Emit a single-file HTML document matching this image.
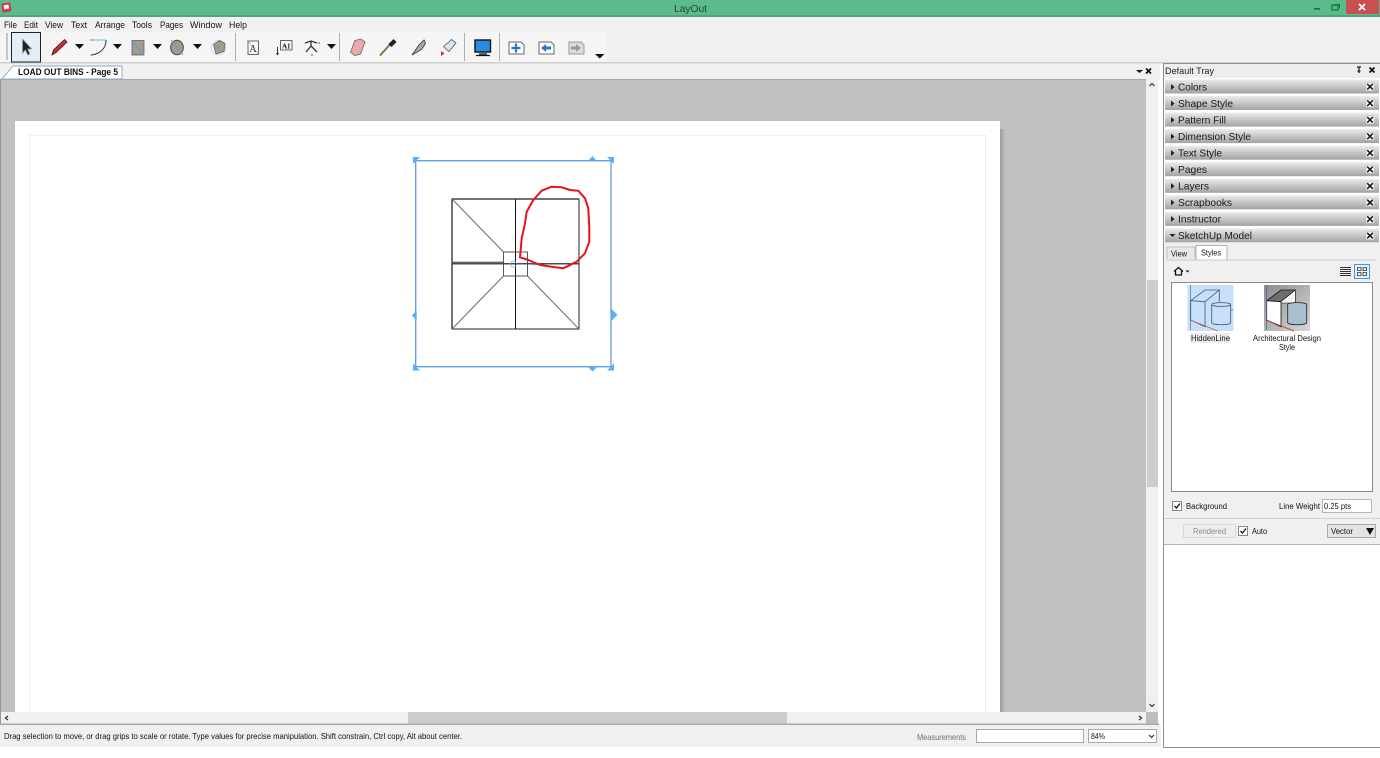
<!DOCTYPE html>
<html><head><meta charset="utf-8"><title>LayOut</title>
<style>
html,body{margin:0;padding:0;background:#fff;width:1380px;height:758px;overflow:hidden}
svg{display:block;font-family:"Liberation Sans",sans-serif}
text{fill:#111}
.m{font-size:9.5px}
.h{font-size:10.5px;fill:#1a1a1a}
.s{font-size:8.6px}
</style></head><body>
<svg width="1380" height="758" viewBox="0 0 1380 758" xmlns="http://www.w3.org/2000/svg">
<defs>
<linearGradient id="hg" x1="0" y1="0" x2="0" y2="1"><stop offset="0" stop-color="#ececec"/><stop offset=".45" stop-color="#cacaca"/><stop offset="1" stop-color="#a2a2a2"/></linearGradient>
<linearGradient id="sh" x1="0" y1="0" x2="1" y2="0"><stop offset="0" stop-color="#9a9a9a"/><stop offset="1" stop-color="#c0c0c0"/></linearGradient>
<linearGradient id="tg" x1="0" y1="0" x2="1" y2="1"><stop offset="0" stop-color="#8c8c8c"/><stop offset="1" stop-color="#d8d8d8"/></linearGradient>
<g id="cx"><rect x="-4" y="-4" width="8" height="8" fill="#f6f6f6" stroke="#bbb" stroke-width=".5"/><path d="M-2.800-2.800L2.800 2.800M2.800-2.800L-2.800 2.800" stroke="#111" stroke-width="1.500"/></g>
</defs>
<rect width="1380" height="758" fill="#fff"/>
<!-- title -->
<rect width="1380" height="15" fill="#5bbb8b"/><rect y="15" width="1380" height="2" fill="#4fa67a"/>
<rect x="2" y="3" width="9" height="9" rx="1" fill="#d8344a" transform="rotate(-10 6 8)"/><rect x="4" y="5" width="5" height="4" fill="#fff" transform="rotate(-10 6 8)"/>
<text x="674" y="12" textLength="33" lengthAdjust="spacingAndGlyphs" style="font-size:10.5px;fill:#1f4a35">LayOut</text>
<rect x="1346" width="33" height="14" fill="#c75050"/>
<path d="M1359 4l6 6M1365 4l-6 6" stroke="#fff" stroke-width="1.600"/>
<rect x="1314" y="8" width="6" height="1.600" fill="#173"/>
<rect x="1332" y="5" width="6" height="5" fill="none" stroke="#173" stroke-width="1.200"/><path d="M1334 4.500h5.500v4" fill="none" stroke="#173"/>
<!-- menu + toolbar -->
<rect y="17" width="1380" height="46" fill="#f0f0f0"/>
<text class="m" x="4" y="28" textLength="13" lengthAdjust="spacingAndGlyphs">File</text>
<text class="m" x="24" y="28" textLength="14" lengthAdjust="spacingAndGlyphs">Edit</text>
<text class="m" x="45" y="28" textLength="18" lengthAdjust="spacingAndGlyphs">View</text>
<text class="m" x="71" y="28" textLength="16" lengthAdjust="spacingAndGlyphs">Text</text>
<text class="m" x="95" y="28" textLength="30" lengthAdjust="spacingAndGlyphs">Arrange</text>
<text class="m" x="132" y="28" textLength="20" lengthAdjust="spacingAndGlyphs">Tools</text>
<text class="m" x="160" y="28" textLength="23" lengthAdjust="spacingAndGlyphs">Pages</text>
<text class="m" x="190" y="28" textLength="32" lengthAdjust="spacingAndGlyphs">Window</text>
<text class="m" x="229" y="28" textLength="18" lengthAdjust="spacingAndGlyphs">Help</text>
<rect y="32" width="606.500" height="30" fill="#f5f5f5"/>
<rect y="62" width="1380" height="1.500" fill="#cfcfcf"/>
<rect x="6" y="33" width="2" height="27" fill="#c4c4c4"/>
<rect x="11.500" y="32.500" width="29" height="29.500" fill="#e3eef9" stroke="#222"/>
<path d="M22.500 39v14l3-3 2.200 5 2.200-1-2.200-5h4z" fill="#222" stroke="#999" stroke-width=".8"/>
<!-- pencil -->
<path d="M52 55l1.500-5 11-10.500 2.500 2.500-11 10.500z" fill="#e3222a" stroke="#222" stroke-width=".8"/>
<path d="M75 44h9l-4.500 5zM113 44h9l-4.500 5zM153 44h9l-4.500 5zM193 44h9l-4.500 5zM327 44h9l-4.500 5zM595 54h9.500l-4.750 4.500z" fill="#111"/>
<!-- arc -->
<path d="M92 40h14" stroke="#8fc0ea" stroke-width="1.200"/><path d="M106 40c0 7-4 13-14 15" fill="none" stroke="#333" stroke-width="1"/>
<circle cx="91.500" cy="40" r="1" fill="#4aa0e8"/><circle cx="91.500" cy="55" r="1" fill="#4aa0e8"/>
<!-- rect -->
<rect x="132" y="40.500" width="12" height="14.500" fill="#a39c88" stroke="#555" stroke-width=".7"/><path d="M131.500 40l12.500 15" stroke="#4aa0e8"/>
<!-- circle -->
<ellipse cx="177" cy="47.500" rx="6.300" ry="7.300" fill="#a39c88" stroke="#444"/><path d="M171 40l12 15" stroke="#4aa0e8"/>
<!-- polygon -->
<circle cx="218.500" cy="47.500" r="7.300" fill="none" stroke="#bfe0f5" stroke-width="1"/>
<path d="M213.500 44.500l6-4 5.500 3-1 8-8 2.500z" fill="#a39c88" stroke="#666" stroke-width=".8"/><circle cx="218.500" cy="47.500" r=".9" fill="#4aa0e8"/>
<rect x="235" y="33" width="1" height="28" fill="#b0b0b0"/>
<!-- text tools -->
<rect x="248" y="41" width="10.500" height="13.500" fill="#fafafa" stroke="#444" stroke-width=".8"/><text x="253" y="52" text-anchor="middle" style="font-size:10px;font-family:'Liberation Serif',serif">A</text><path d="M247 40l12 15" stroke="#4aa0e8" stroke-width=".6"/>
<rect x="280.500" y="40.500" width="11.500" height="9.500" fill="#fafafa" stroke="#444" stroke-width=".8"/><text x="282" y="48.500" style="font-size:7px;font-weight:bold;font-family:'Liberation Serif',serif">A1</text><path d="M277.500 47v8" stroke="#333"/><path d="M276 53h3l-1.500 2.500z" fill="#222"/>
<path d="M305 43l6-2 6 2M311 41v5l-5 6M311 46l6 6" fill="none" stroke="#333" stroke-width="1.300"/><circle cx="319" cy="43" r="1" fill="#3c3"/><circle cx="312" cy="55" r="1" fill="#3c3"/>
<rect x="339" y="33" width="1" height="28" fill="#b0b0b0"/>
<!-- eraser -->
<path d="M350.500 52l4.500-11.500 6-1.500 4 3-4.500 12-6 1.500z" fill="#f0a6ae" stroke="#666" stroke-width=".8"/>
<!-- dropper -->
<path d="M380 55.500l10-11" stroke="#8a6a3a" stroke-width="1.800"/><path d="M389.500 44l4-4 2 2-4 4z" fill="#222" stroke="#222" stroke-width="1.500"/>
<!-- knife -->
<path d="M412 55l7-10 5-5 1.500 3.500-4 6z" fill="#aaa" stroke="#333" stroke-width=".8"/>
<!-- glue -->
<path d="M443.500 46.500l8-7 4.500 3.500-7 8.500z" fill="#d8e6f2" stroke="#555" stroke-width=".8"/><path d="M441 51l3.500 2.500-3.500 2.500z" fill="#c33"/>
<rect x="464" y="33" width="1" height="28" fill="#b0b0b0"/>
<!-- monitor -->
<rect x="475" y="40" width="15.500" height="12" fill="#2a8be0" stroke="#111" stroke-width="1.400"/><path d="M479 54h8M476 55.500h14" stroke="#111" stroke-width="1.200"/>
<rect x="499" y="33" width="1" height="28" fill="#b0b0b0"/>
<!-- page tools -->
<path d="M509 42h12l3 3v9h-15z" fill="#fff" stroke="#666"/><path d="M516 43.500v9M511.500 48h9" stroke="#1e78cc" stroke-width="2.200"/>
<path d="M539 42h12l3 3v9h-15z" fill="#fff" stroke="#666"/><path d="M541 48l5-4v2.500h5v3h-5v2.500z" fill="#1e78cc"/>
<path d="M569 42h12l3 3v9h-15z" fill="#ddd" stroke="#999"/><path d="M581 48l-5-4v2.500h-5v3h5v2.500z" fill="#999"/>
<!-- tabs -->
<rect y="63.500" width="1160" height="16" fill="#f0f0f0"/>
<path d="M2 79l11-13h109v13z" fill="#fff" stroke="#8aa8c0" stroke-width=".9"/>
<text x="18" y="75" textLength="100" lengthAdjust="spacingAndGlyphs" style="font-size:8.800px;font-weight:bold">LOAD OUT BINS - Page 5</text>
<path d="M1136 70h7l-3.500 3z" fill="#111"/><path d="M1146 68.500l5 5M1151 68.500l-5 5" stroke="#111" stroke-width="1.700"/>
<!-- canvas -->
<rect x="0" y="79" width="1146" height="633" fill="#c0c0c0"/><rect x="0" y="79" width="1146" height="1" fill="#9ab"/><rect x="0" y="79" width="1" height="646" fill="#999"/>
<rect x="1000" y="129" width="5" height="583" fill="url(#sh)"/>
<rect x="15" y="121" width="985" height="591" fill="#fff"/>
<path d="M29.500 712V135.500H985.500V712" fill="none" stroke="#e9f0f0"/>
<!-- drawing -->
<g fill="none">
<rect x="452" y="199" width="127" height="130" stroke="#222" stroke-width="1"/>
<path d="M452 199v130M452 199h127" stroke="#444" stroke-width="1.500"/>
<path d="M515.500 199v130" stroke="#111" stroke-width="1"/>
<path d="M452 263.800h127" stroke="#111" stroke-width="1.100"/>
<path d="M452 262.300h51" stroke="#666" stroke-width="1.300"/>
<rect x="503.500" y="252" width="24" height="24" stroke="#444" stroke-width=".9"/>
<path d="M452 199l51.500 53M452 329l51.500-53M579 329l-51.500-53" stroke="#666" stroke-width=".9"/>
<circle cx="513.500" cy="264" r="3" stroke="#7ab8ee" stroke-width=".8"/><path d="M532 264.500h5" stroke="#4aa0e8" stroke-width="1.500"/>
<path d="M520 257.300L521.700 238.300 525 223.300 526.700 211.700 533.300 200 541.700 190.700 551.700 186.700 561.700 187.300 570 190 578.300 190.700 585 198.300 588.300 208.300 589.300 228.300 589.300 241.700 585 253.300 576.700 261.700 563.300 268.300 551.700 266.700 540 265 528.300 260z" stroke="#e8121e" stroke-width="2" stroke-linejoin="round"/>
<rect x="415.700" y="160.700" width="195.300" height="206" stroke="#5a9ae6" stroke-width="1.300"/>
</g>
<g fill="#5aaef5">
<path d="M413 157h7l-7 7zM614 157h-7l7 7zM413 370.500h7l-7-7zM614 370.500h-7l7-7z"/>
<path d="M415 158v3h-2zM612 158v3h2z"/>
<path d="M587.700 161.500l4.700-5.500 4.700 5.500zM587 366h11l-5.500 5.500zM416.700 310.700v9.400l-5-4.700zM610.700 308l6.700 6.800-6.700 6.900z"/>
</g>
<!-- scrollbars -->
<rect x="1146" y="79" width="12" height="633" fill="#f0f0f0"/>
<rect x="1147" y="280" width="11" height="207" fill="#cdcdcd"/>
<path d="M1149.500 86l2.500-2.500 2.500 2.500M1149.500 704l2.500 2.500 2.500-2.500" fill="none" stroke="#333" stroke-width="1.200"/>
<rect x="1" y="712" width="1145" height="11.500" fill="#f0f0f0"/>
<rect x="408" y="712" width="379" height="11.500" fill="#cdcdcd"/>
<path d="M8 716l-2.500 2 2.500 2M1139 716l2.500 2-2.500 2" fill="none" stroke="#333" stroke-width="1.200"/>
<rect x="1146" y="712" width="12" height="11.500" fill="#bdbdbd"/>
<rect x="0" y="723.500" width="1159" height="1.500" fill="#a9a9a9"/>
<!-- status -->
<rect y="725" width="1161" height="22" fill="#f0f0f0"/>
<text class="s" x="4" y="739" textLength="458" lengthAdjust="spacingAndGlyphs">Drag selection to move, or drag grips to scale or rotate. Type values for precise manipulation. Shift constrain, Ctrl copy, Alt about center.</text>
<text class="s" x="917" y="740" textLength="49" lengthAdjust="spacingAndGlyphs" style="fill:#66707a">Measurements</text>
<rect x="976.500" y="729.500" width="107" height="13" fill="#fff" stroke="#a8a8a8"/>
<rect x="1088.500" y="729.500" width="68" height="13" fill="#fff" stroke="#a8a8a8"/>
<text class="s" x="1091" y="739" textLength="14" lengthAdjust="spacingAndGlyphs">84%</text>
<path d="M1149 735l2.500 2.500 2.500-2.500" fill="none" stroke="#333" stroke-width="1.200"/>
<!-- tray -->
<rect x="1163.500" y="63.500" width="217" height="684" fill="#fff" stroke="#8e8e8e"/>
<rect x="1164" y="64" width="216" height="14" fill="#ededed"/>
<text x="1165" y="74" textLength="49" lengthAdjust="spacingAndGlyphs" style="font-size:9.500px;fill:#222">Default Tray</text>
<path d="M1357 67h4M1359 67v6M1357.500 71h3" stroke="#222" stroke-width="1.300"/>
<path d="M1369.500 67.500l5 5M1374.500 67.500l-5 5" stroke="#111" stroke-width="1.700"/>
<g id="heads" fill="url(#hg)">
<rect x="1165" y="79.500" width="214" height="14"/>
<rect x="1165" y="96" width="214" height="14"/>
<rect x="1165" y="112.600" width="214" height="14"/>
<rect x="1165" y="129.100" width="214" height="14"/>
<rect x="1165" y="145.700" width="214" height="14"/>
<rect x="1165" y="162.200" width="214" height="14"/>
<rect x="1165" y="178.800" width="214" height="14"/>
<rect x="1165" y="195.300" width="214" height="14"/>
<rect x="1165" y="211.900" width="214" height="14"/>
<rect x="1165" y="228.400" width="214" height="14"/>
</g>
<text class="h" x="1178" y="90.500" textLength="29" lengthAdjust="spacingAndGlyphs">Colors</text>
<text class="h" x="1178" y="107" textLength="55" lengthAdjust="spacingAndGlyphs">Shape Style</text>
<text class="h" x="1178" y="123.500" textLength="48" lengthAdjust="spacingAndGlyphs">Pattern Fill</text>
<text class="h" x="1178" y="140" textLength="73" lengthAdjust="spacingAndGlyphs">Dimension Style</text>
<text class="h" x="1178" y="156.500" textLength="44" lengthAdjust="spacingAndGlyphs">Text Style</text>
<text class="h" x="1178" y="173" textLength="29" lengthAdjust="spacingAndGlyphs">Pages</text>
<text class="h" x="1178" y="189.500" textLength="31" lengthAdjust="spacingAndGlyphs">Layers</text>
<text class="h" x="1178" y="206" textLength="54" lengthAdjust="spacingAndGlyphs">Scrapbooks</text>
<text class="h" x="1178" y="222.500" textLength="43" lengthAdjust="spacingAndGlyphs">Instructor</text>
<text class="h" x="1178" y="239" textLength="74" lengthAdjust="spacingAndGlyphs">SketchUp Model</text>
<path d="M1171 84l3.500 3-3.500 3zM1171 100.500l3.500 3-3.500 3zM1171 117l3.500 3-3.500 3zM1171 133.500l3.500 3-3.500 3zM1171 150l3.500 3-3.500 3zM1171 166.500l3.500 3-3.500 3zM1171 183l3.500 3-3.500 3zM1171 199.500l3.500 3-3.500 3zM1171 216l3.500 3-3.500 3zM1169.500 234h6l-3 3z" fill="#222"/>
<use href="#cx" x="1370" y="86.700"/><use href="#cx" x="1370" y="103.200"/><use href="#cx" x="1370" y="119.800"/><use href="#cx" x="1370" y="136.300"/><use href="#cx" x="1370" y="152.900"/><use href="#cx" x="1370" y="169.400"/><use href="#cx" x="1370" y="186"/><use href="#cx" x="1370" y="202.500"/><use href="#cx" x="1370" y="219.100"/><use href="#cx" x="1370" y="235.600"/>
<!-- panel -->
<rect x="1164" y="243" width="216" height="302" fill="#f0f0f0"/>
<rect x="1164" y="544" width="216" height="1" fill="#b5b5b5"/>
<rect x="1164" y="518" width="216" height="1" fill="#d0d0d0"/>
<path d="M1167 259v-12h28v12" fill="#e8e8e8" stroke="#c0c0c0"/>
<path d="M1196 260v-14.500h31V260" fill="#fff" stroke="#b0b0b0"/>
<rect x="1166" y="259.500" width="210" height="1" fill="#c8c8c8"/>
<text x="1171" y="256.500" class="s" textLength="16" lengthAdjust="spacingAndGlyphs">View</text><text x="1201" y="255.500" class="s" textLength="20" lengthAdjust="spacingAndGlyphs">Styles</text>
<path d="M1174 271.500l4.500-4 4.500 4M1175.500 271v4h6v-4" fill="none" stroke="#111" stroke-width="1.300"/><path d="M1185.500 270.500h4l-2 2z" fill="#111"/>
<path d="M1340 267.500h11M1340 269.500h11M1340 271.500h11M1340 273.500h11M1340 275.500h11" stroke="#333" stroke-width=".9"/>
<rect x="1354.500" y="264.500" width="15" height="14" fill="#e6f1fb" stroke="#3b9ae8"/>
<path d="M1357.500 267.500h3.500v3h-3.500zM1363 267.500h3.500v3H1363zM1357.500 272.500h3.500v3h-3.500zM1363 272.500h3.500v3H1363z" fill="none" stroke="#333" stroke-width=".8"/>
<rect x="1171.500" y="282.500" width="201" height="209" fill="#fff" stroke="#8a8a8a"/>
<!-- thumb 1 -->
<rect x="1187.500" y="285" width="46" height="46" fill="#c5e0f8"/>
<g fill="none" stroke="#3e5a78" stroke-width=".8"><path d="M1190.500 285v45" stroke="#5a80b8"/><path d="M1190.700 300.700l14.300-10.700h14.300L1205 301.700zM1190.700 300.700V320l14.300 6.700v-25M1219.300 290v12"/><path d="M1211.700 304.500c0-2.500 19-2.500 19 0s-19 2.500-19 0v18c0 3 19 3 19 0v-18"/></g>
<path d="M1190 320l28 11" stroke="#d05a5a" stroke-width=".9"/><path d="M1231 310h2" stroke="#3b3"/>
<rect x="1190" y="333" width="40" height="10" fill="#ececec"/>
<text class="s" x="1191" y="341" textLength="39" lengthAdjust="spacingAndGlyphs">HiddenLine</text>
<!-- thumb 2 -->
<rect x="1264" y="285" width="46" height="46" fill="url(#tg)"/>
<path d="M1266.700 300.700l14.300-10.700h14.300L1281 301.700z" fill="#6e6e6e" stroke="#111" stroke-width=".8"/>
<path d="M1266.700 300.700V320l14.300 6.700v-25z" fill="#fff" stroke="#111" stroke-width=".8"/>
<path d="M1281 301.700l14.300-11.700v13h-14.300z" fill="#f4f4f4" stroke="#111" stroke-width=".6"/>
<path d="M1287.700 304.500c0-2.500 19-2.500 19 0v18c0 3-19 3-19 0z" fill="#a9bfce" stroke="#222" stroke-width=".8"/>
<path d="M1266.500 285v45" stroke="#4a6a90" stroke-width=".8"/><path d="M1266 320l28 11" stroke="#b33" stroke-width=".9"/>
<text class="s" x="1253" y="341" textLength="68" lengthAdjust="spacingAndGlyphs">Architectural Design</text>
<text class="s" x="1279" y="350" textLength="16" lengthAdjust="spacingAndGlyphs">Style</text>
<!-- bottom controls -->
<rect x="1172.500" y="501.500" width="9" height="9" fill="#fff" stroke="#888"/><path d="M1174.500 506l2 2 3.500-4.500" fill="none" stroke="#111" stroke-width="1.300"/>
<text class="s" x="1186" y="509" textLength="41" lengthAdjust="spacingAndGlyphs">Background</text>
<text class="s" x="1279" y="509" textLength="41" lengthAdjust="spacingAndGlyphs">Line Weight</text>
<rect x="1322.500" y="499.500" width="49" height="13" fill="#fff" stroke="#b8b8b8"/>
<text class="s" x="1324" y="509" textLength="27" lengthAdjust="spacingAndGlyphs">0.25 pts</text>
<rect x="1183.500" y="524.500" width="52" height="13" fill="#eee" stroke="#d8d8d8"/>
<text class="s" x="1193" y="534" textLength="33" lengthAdjust="spacingAndGlyphs" style="fill:#8a8a8a">Rendered</text>
<rect x="1238.500" y="526.500" width="9" height="9" fill="#fff" stroke="#888"/><path d="M1240.500 531l2 2 3.500-4.500" fill="none" stroke="#111" stroke-width="1.300"/>
<text class="s" x="1252" y="534" textLength="15" lengthAdjust="spacingAndGlyphs">Auto</text>
<rect x="1327.500" y="524.500" width="48" height="13" fill="#e4e4e4" stroke="#aaa"/>
<text class="s" x="1331" y="534" textLength="22" lengthAdjust="spacingAndGlyphs">Vector</text>
<path d="M1366 528h8l-4 7z" fill="#111"/>
</svg>
</body></html>
